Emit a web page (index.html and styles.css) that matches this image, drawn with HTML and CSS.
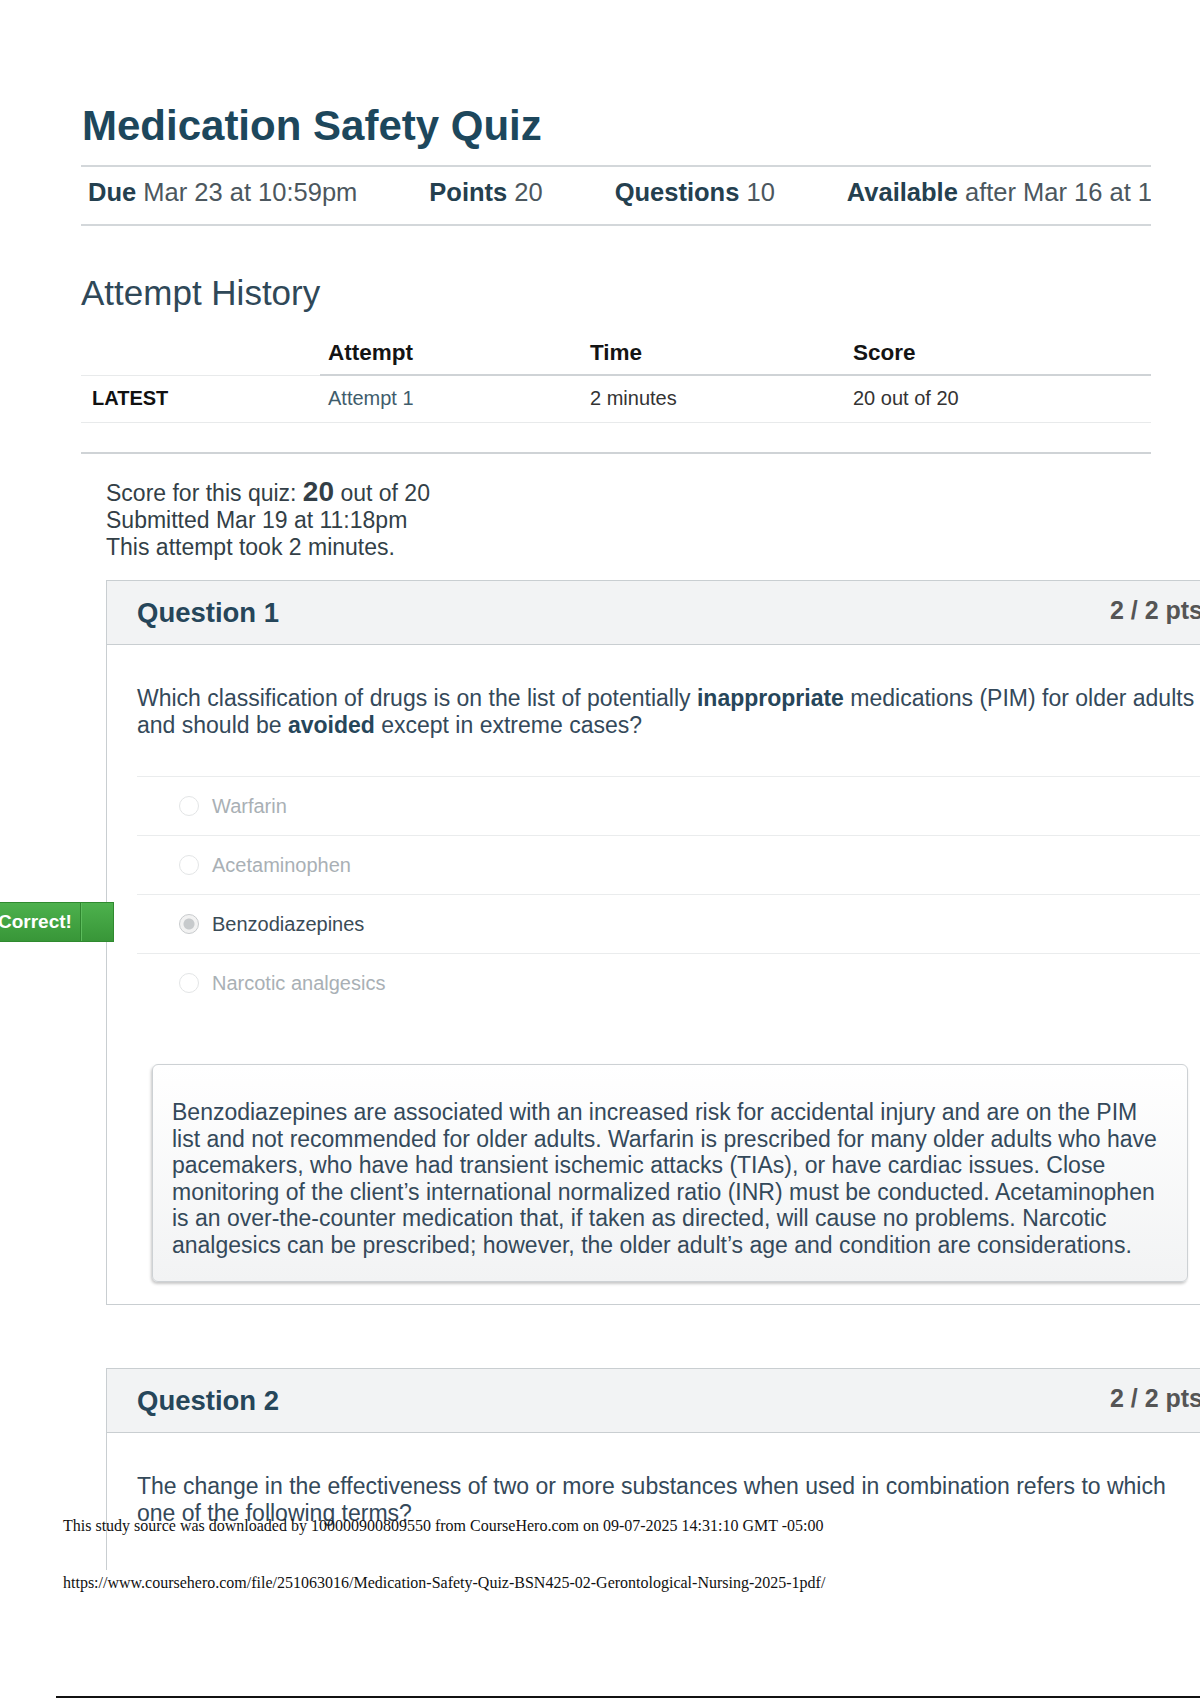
FILE: index.html
```html
<!doctype html>
<html>

<head>
  <title>Medication Safety Quiz</title>
  <link rel="stylesheet" href="styles.css">
</head>

<body>
  <div class="page">
    <div class="quiz">
      <h1 class="quiz-title">Medication Safety Quiz</h1>

      <div class="quiz-meta">
        <div><b>Due</b> Mar 23 at 10:59pm</div>
        <div><b>Points</b> 20</div>
        <div><b>Questions</b> 10</div>
        <div><b>Available</b> after Mar 16 at 12am - Mar 23 at 10:59pm</div>
      </div>

      <h2 class="history-title">Attempt History</h2>

      <table class="history">
        <colgroup>
          <col style="width:239px">
          <col style="width:262px">
          <col style="width:263px">
          <col>
        </colgroup>
        <thead>
          <tr><th></th><th>Attempt</th><th>Time</th><th>Score</th></tr>
        </thead>
        <tbody>
          <tr>
            <td class="latest">LATEST</td>
            <td><a href="#">Attempt 1</a></td>
            <td>2 minutes</td>
            <td>20 out of 20</td>
          </tr>
        </tbody>
      </table>
      <div class="history-end"></div>

      <div class="summary">
        <div>Score for this quiz: <span class="big-score">20</span> out of 20</div>
        <div>Submitted Mar 19 at 11:18pm</div>
        <div>This attempt took 2 minutes.</div>
      </div>

      <div class="question">
        <div class="question-header">
          <span class="question-name">Question 1</span>
          <span class="question-pts">2 / 2 pts</span>
        </div>
        <div class="question-body">
          <div class="question-text">Which classification of drugs is on the list of potentially <b>inappropriate</b> medications (PIM) for older adults and should be <b>avoided</b> except in extreme cases?</div>

          <div class="answers">
            <div class="answer"><span class="radio"></span>Warfarin</div>
            <div class="answer"><span class="radio"></span>Acetaminophen</div>
            <div class="answer selected">
              <span class="answer-flag"><span class="flag-label">Correct!</span><span class="flag-tail"></span></span>
              <span class="radio"></span>Benzodiazepines
            </div>
            <div class="answer"><span class="radio"></span>Narcotic analgesics</div>
          </div>

          <div class="comment">Benzodiazepines are associated with an increased risk for accidental injury and are on the PIM list and not recommended for older adults. Warfarin is prescribed for many older adults who have pacemakers, who have had transient ischemic attacks (TIAs), or have cardiac issues. Close monitoring of the client’s international normalized ratio (INR) must be conducted. Acetaminophen is an over-the-counter medication that, if taken as directed, will cause no problems. Narcotic analgesics can be prescribed; however, the older adult’s age and condition are considerations.</div>
        </div>
      </div>

      <div class="question cut">
        <div class="question-header">
          <span class="question-name">Question 2</span>
          <span class="question-pts">2 / 2 pts</span>
        </div>
        <div class="question-body">
          <div class="question-text">The change in the effectiveness of two or more substances when used in combination refers to which one of the following terms?</div>
        </div>
      </div>
    </div>

    <!-- print footer stamped over the page -->
    <div class="source-note">
      <p>This study source was downloaded by 100000900809550 from CourseHero.com on 09-07-2025 14:31:10 GMT -05:00</p>
      <p>https://www.coursehero.com/file/251063016/Medication-Safety-Quiz-BSN425-02-Gerontological-Nursing-2025-1pdf/</p>
    </div>
    <div class="page-rule"></div>
  </div>
</body>

</html>
```

FILE: styles.css
```css
body {
  margin: 0;
  background: #fff;
  font-family: "Liberation Sans", Arial, sans-serif;
  color: #2d3b45;
}

.page {
  position: relative;
  width: 1200px;
  height: 1700px;
  overflow: hidden;
}

.quiz {
  width: 1070px;
  margin-left: 81px;
  padding-top: 102px;
}

.quiz-title {
  margin: 0 0 15px 1px;
  font-size: 42px;
  line-height: 48px;
  color: #1d475c;
}

.quiz-meta {
  display: flex;
  gap: 72px;
  padding: 10px 0 17px 7px;
  border-top: 2px solid #d3d7da;
  border-bottom: 2px solid #d3d7da;
  white-space: nowrap;
  overflow: hidden;
  font-size: 25.5px;
  line-height: 30px;
  color: #4c575e;
}
.quiz-meta b {
  color: #24404f;
}

.history-title {
  margin: 46px 0 0;
  font-size: 35px;
  line-height: 42px;
  font-weight: normal;
  color: #2f4858;
}

.history {
  width: 100%;
  margin-top: 18px;
  border-collapse: collapse;
}
.history th {
  padding: 8px 8px;
  text-align: left;
  font-size: 22.5px;
  line-height: 26px;
  color: #141414;
  border-bottom: 2px solid #cfd3d6;
}
.history th:first-child {
  border-bottom: none;
}
.history td {
  padding: 10px 8px 12px;
  font-size: 20px;
  line-height: 24px;
  color: #333;
  border-top: 1px solid #e8eaeb;
  border-bottom: 1px solid #e8eaeb;
}
.history td.latest {
  padding-left: 11px;
  font-weight: bold;
  color: #111;
}
.history a {
  color: #3f5d6c;
  text-decoration: none;
}
.history-end {
  height: 29px;
  border-bottom: 2px solid #cfd3d6;
}

.summary {
  margin: 26px 0 0 25px;
  font-size: 23px;
  line-height: 27px;
  color: #333f47;
}
.big-score {
  font-size: 28px;
  line-height: 20px;
  font-weight: bold;
}

.question {
  box-sizing: border-box;
  width: 1132px;
  margin: 19px 0 0 25px;
  border: 1px solid #c9ced1;
}
.question + .question {
  margin-top: 63px;
}
.question.cut {
  height: 202px;
  border-bottom: none;
}
.question-header {
  box-sizing: border-box;
  display: flex;
  justify-content: space-between;
  align-items: center;
  height: 64px;
  padding: 0 34px 0 30px;
  background: #f2f3f4;
  border-bottom: 1px solid #c9ced1;
}
.question-name {
  font-size: 27.5px;
  line-height: 32px;
  font-weight: bold;
  color: #26465a;
}
.question-pts {
  margin-top: -6px;
  font-size: 25px;
  line-height: 28px;
  font-weight: bold;
  color: #555;
}
.question-body {
  padding: 40px 30px 22px;
}
.question-text {
  font-size: 23px;
  line-height: 27px;
  color: #34495a;
}
.question-text b {
  color: #26465a;
}

.answers {
  margin-top: 37px;
}
.answer {
  position: relative;
  display: flex;
  align-items: center;
  height: 59px;
  box-sizing: border-box;
  padding-left: 42px;
  border-top: 1px solid #eaeced;
  font-size: 20px;
  color: #a9b0b5;
}
.answer.selected {
  color: #3a4b56;
}
.radio {
  flex: none;
  box-sizing: border-box;
  width: 20px;
  height: 20px;
  margin-right: 13px;
  border: 1px solid #e3e5e6;
  border-radius: 50%;
  background: #fff;
}
.answer.selected .radio {
  border-color: #c8cbcd;
  background: radial-gradient(circle, #c7cacc 0 5px, #f2f2f2 6px);
}

/* the green "Correct!" marker hanging off the left edge */
.answer-flag {
  position: absolute;
  left: -147px;
  top: 7px;
  display: flex;
  height: 40px;
  box-sizing: border-box;
  border: 1px solid #2f8a2f;
  background: linear-gradient(#4db14d, #389638);
  color: #fff;
  font-size: 19px;
  font-weight: bold;
  line-height: 38px;
}
.flag-label {
  padding: 0 8px 0 7px;
  border-right: 1px solid #2f862f;
}
.flag-tail {
  width: 31px;
  border-left: 1px solid #5cbc5c;
}

.comment {
  box-sizing: border-box;
  width: 1036px;
  margin: 52px 0 0 15px;
  padding: 34px 17px 23px 19px;
  border: 1px solid #cdd1d4;
  border-radius: 6px;
  background: linear-gradient(#fff, #f2f3f4);
  box-shadow: -1px 2px 3px rgba(0, 0, 0, 0.22);
  font-size: 23px;
  line-height: 26.5px;
  color: #34495a;
}

.source-note {
  position: absolute;
  left: 63px;
  top: 1516px;
  font-family: "Liberation Serif", "Times New Roman", serif;
  font-size: 16px;
  line-height: 20px;
  color: #111;
}
.source-note p {
  margin: 0 0 37px;
}
.page-rule {
  position: absolute;
  left: 56px;
  right: 0;
  top: 1696px;
  height: 2px;
  background: #111;
}
```
